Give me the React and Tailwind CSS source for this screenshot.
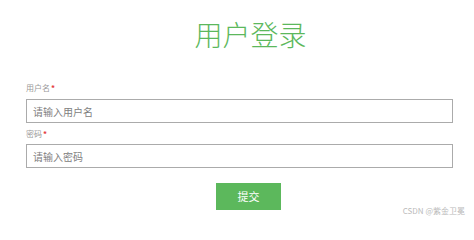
export default function App() {
  const font = { fontFamily: '"Noto Sans CJK SC", "Noto Sans", sans-serif' };
  return (
    <div className="relative w-[474px] h-[220px] bg-white overflow-hidden" style={font}>
      <div className="flex flex-col pl-[26px] pr-[21px]">
        <h1 className="h-[72px] pt-[15px] text-center text-[28px] leading-[38px] font-light text-[#5cb85c] pl-[22px]">
          用户登录
        </h1>
        <label className="h-[27px] pt-[10px] text-[8px] leading-[12px] text-[#999]">
          用户名<span className="text-[#e4393c] font-bold ml-[1px]">*</span>
        </label>
        <div className="h-[24px] border border-[#ababab] flex items-center px-[6px] text-[10px] text-[#808080]">
          请输入用户名
        </div>
        <label className="h-[21px] pt-[5px] text-[8px] leading-[12px] text-[#999]">
          密码<span className="text-[#e4393c] font-bold ml-[1px]">*</span>
        </label>
        <div className="h-[24px] border border-[#ababab] flex items-center px-[6px] text-[10px] text-[#808080]">
          请输入密码
        </div>
        <div className="pt-[15px] pl-[190px]">
          <div className="w-[65px] h-[27px] bg-[#5cb85c] text-white text-[11px] flex items-center justify-center">
            提交
          </div>
        </div>
      </div>
      <div className="absolute right-[9px] bottom-[4px] text-[8px] leading-[10px] text-[#bbb]">
        CSDN @紫金卫冕
      </div>
    </div>
  );
}
